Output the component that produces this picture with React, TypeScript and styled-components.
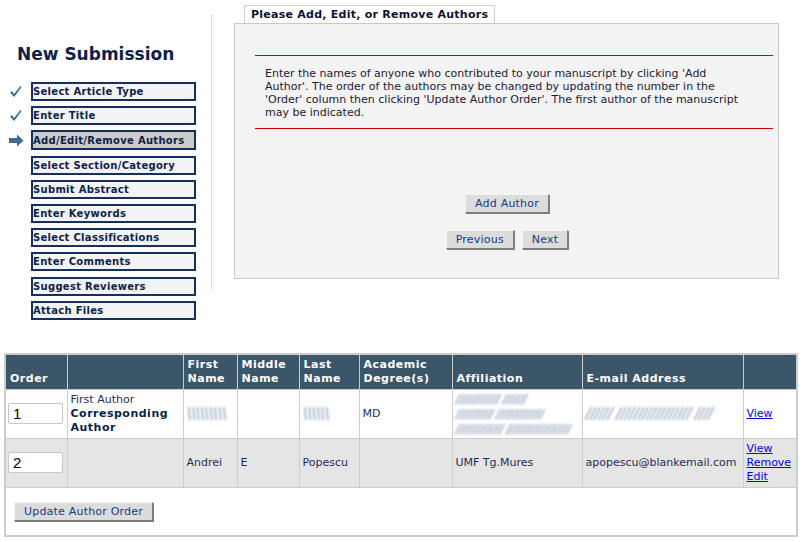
import React from "react";
import styled, { createGlobalStyle } from "styled-components";

const Global = createGlobalStyle`
  html, body { margin: 0; padding: 0; background: #fff; }
  body { font-family: "DejaVu Sans", Verdana, sans-serif; font-size: 11px; color: #1f2d55; }
`;

const Page = styled.div`
  width: 809px;
`;

const Top = styled.div`
  display: flex;
  align-items: flex-start;
`;

const Sidebar = styled.div`
  width: 212px;
  height: 275px;
  margin-top: 15px;
  border-right: 1px dotted #bdbdbd;
  box-sizing: border-box;
  padding-top: 29px;
`;

const Title = styled.h1`
  margin: 0 0 17px 17px;
  font-size: 17px;
  line-height: 21px;
  font-weight: bold;
  color: #0d1f4a;
`;

const NavList = styled.div`
  display: flex;
  flex-direction: column;
  gap: 5.2px;
`;

const NavRow = styled.div`
  display: flex;
  align-items: center;
`;

const IconCell = styled.div`
  width: 31px;
  height: 19px;
  display: flex;
  align-items: center;
  padding-left: 9px;
  box-sizing: border-box;
`;

const NavBox = styled.div<{ $active?: boolean }>`
  width: 165px;
  height: ${(p) => (p.$active ? 20 : 19)}px;
  box-sizing: border-box;
  border: 2px solid #15305a;
  background: ${(p) => (p.$active ? "#cbcbcb" : "#f3f3f3")};
  font-size: 10px;
  font-weight: bold;
  letter-spacing: 0.3px;
  color: #0d1f4a;
  display: flex;
  align-items: center;
  padding-left: 0;
  white-space: nowrap;
`;

const Main = styled.div`
  margin-left: 22px;
  margin-top: 5px;
  display: flex;
  flex-direction: column;
`;

const Tab = styled.div`
  align-self: flex-start;
  margin-left: 10px;
  height: 18px;
  box-sizing: border-box;
  padding: 2px 6px 0 6px;
  border: 1px solid #cfcfcf;
  border-bottom: none;
  background: #fff;
  font-weight: bold;
  font-size: 11px;
  letter-spacing: 0.25px;
  color: #0d1433;
  white-space: nowrap;
`;

const Panel = styled.div`
  width: 545px;
  height: 256px;
  box-sizing: border-box;
  background: #f3f3f3;
  border: 1px solid #c8c8c8;
  padding: 31px 5px 0 20px;
  display: flex;
  flex-direction: column;
`;

const RedRule = styled.div`
  height: 1px;
  background: #cc0000;
`;

const Intro = styled.p`
  margin: 11px 0 9px 0;
  padding: 0 10px;
  line-height: 13px;
  color: #1d1a33;
  white-space: nowrap;
`;

const ButtonRow = styled.div<{ $top: number }>`
  display: flex;
  justify-content: center;
  gap: 8px;
  margin-top: ${(p) => p.$top}px;
  margin-left: -14px;
`;

const Btn = styled.button`
  font-family: "DejaVu Sans", Verdana, sans-serif;
  font-size: 11px;
  letter-spacing: 0.2px;
  color: #18398a;
  background: #dcdcdc;
  height: 19px;
  padding: 0 9px;
  border: 1px solid;
  border-color: #f6f6f6 #7d7d7d #7d7d7d #f6f6f6;
  box-shadow: 1px 1px 0 #7d7d7d;
  cursor: pointer;
  line-height: 15px;
`;

const Table = styled.table`
  margin: 63px 0 0 4px;
  width: 794px;
  border-collapse: collapse;
  border: 2px solid #cdcdcd;
  table-layout: fixed;
`;

const Th = styled.th<{ $w: number }>`
  width: ${(p) => p.$w}px;
  background: #3b5569;
  color: #fff;
  font-size: 11px;
  font-weight: bold;
  letter-spacing: 0.5px;
  text-align: left;
  vertical-align: bottom;
  padding: 0 4px 3px 4px;
  height: 35px;
  line-height: 14px;
  border: 1px solid #cdcdcd;
  box-sizing: border-box;
`;

const Tr = styled.tr<{ $alt?: boolean }>`
  background: ${(p) => (p.$alt ? "#e5e5e5" : "#fff")};
`;

const Td = styled.td`
  border: 1px solid #cdcdcd;
  height: 48px;
  padding: 0 3px;
  vertical-align: middle;
  font-size: 11px;
  line-height: 14px;
  color: #1f2d55;
  overflow: hidden;
`;

const OrderInput = styled.input`
  width: 55px;
  height: 21px;
  box-sizing: border-box;
  border: 1px solid #c6c6c6;
  border-radius: 2px;
  font-family: "Liberation Sans", Arial, sans-serif;
  font-size: 15px;
  padding: 0 4px;
  color: #000;
  background: #fff;
  margin-left: -1px;
`;

const Strong = styled.div`
  font-weight: bold;
  letter-spacing: 0.5px;
  color: #0d1f4a;
`;

const Blur = styled.span`
  display: inline-block;
  filter: blur(1px);
  color: #8a9cbb;
  font-size: 16px;
  font-style: italic;
  letter-spacing: -1px;
  white-space: nowrap;
  vertical-align: middle;
  line-height: 18px;
`;

const BlurBlock = styled.div`
  filter: blur(1px);
  color: #8594b0;
  font-style: italic;
  font-size: 13px;
  line-height: 15px;
  letter-spacing: -1px;
  white-space: nowrap;
`;

const ActionLink = styled.a`
  display: block;
  color: #0000ee;
  text-decoration: underline;
  line-height: 14px;
`;

const FooterCell = styled.td`
  border: 1px solid #cdcdcd;
  height: 46px;
  padding: 1px 0 0 8px;
`;

const Check = () => (
  <svg width="13" height="13" viewBox="0 0 13 13">
    <path d="M1 7.5 L3 6 L5 9 L11.5 1 L12.5 2 L5.2 12 Z" fill="#3a6b9c" />
  </svg>
);

const Arrow = () => (
  <svg width="15" height="13" viewBox="0 0 15 13">
    <path d="M0 4 H8 V0.5 L14.5 6.5 L8 12.5 V9 H0 Z" fill="#3b6a9c" />
  </svg>
);

const steps: { label: string; state?: "done" | "active" }[] = [
  { label: "Select Article Type", state: "done" },
  { label: "Enter Title", state: "done" },
  { label: "Add/Edit/Remove Authors", state: "active" },
  { label: "Select Section/Category" },
  { label: "Submit Abstract" },
  { label: "Enter Keywords" },
  { label: "Select Classifications" },
  { label: "Enter Comments" },
  { label: "Suggest Reviewers" },
  { label: "Attach Files" },
];

const cols: { label: React.ReactNode; w: number }[] = [
  { label: "Order", w: 62 },
  { label: "", w: 116 },
  { label: <>First<br />Name</>, w: 54 },
  { label: <>Middle<br />Name</>, w: 62 },
  { label: <>Last<br />Name</>, w: 60 },
  { label: <>Academic<br />Degree(s)</>, w: 93 },
  { label: "Affiliation", w: 130 },
  { label: "E-mail Address", w: 161 },
  { label: "", w: 54 },
];

export default function App() {
  return (
    <Page>
      <Global />
      <Top>
        <Sidebar>
          <Title>New Submission</Title>
          <NavList>
            {steps.map((s) => (
              <NavRow key={s.label}>
                <IconCell>
                  {s.state === "done" && <Check />}
                  {s.state === "active" && <Arrow />}
                </IconCell>
                <NavBox $active={s.state === "active"}>{s.label}</NavBox>
              </NavRow>
            ))}
          </NavList>
        </Sidebar>
        <Main>
          <Tab>Please Add, Edit, or Remove Authors</Tab>
          <Panel>
            <RedRule />
            <Intro>
              Enter the names of anyone who contributed to your manuscript by clicking 'Add
              <br />
              Author'. The order of the authors may be changed by updating the number in the
              <br />
              'Order' column then clicking 'Update Author Order'. The first author of the manuscript
              <br />
              may be indicated.
            </Intro>
            <RedRule />
            <ButtonRow $top={65}>
              <Btn>Add Author</Btn>
            </ButtonRow>
            <ButtonRow $top={17}>
              <Btn>Previous</Btn>
              <Btn>Next</Btn>
            </ButtonRow>
          </Panel>
        </Main>
      </Top>
      <Table>
        <thead>
          <tr>
            {cols.map((c, i) => (
              <Th key={i} $w={c.w}>{c.label}</Th>
            ))}
          </tr>
        </thead>
        <tbody>
          <Tr>
            <Td><OrderInput defaultValue="1" /></Td>
            <Td>
              <div>First Author</div>
              <Strong>Corresponding<br />Author</Strong>
            </Td>
            <Td><Blur>\\\\\\\\\</Blur></Td>
            <Td></Td>
            <Td><Blur>\\\\\\</Blur></Td>
            <Td>MD</Td>
            <Td>
              <BlurBlock>
                ///////////// ///////<br />/////////// //////////////<br />////////////// ///////////////////
              </BlurBlock>
            </Td>
            <Td><Blur>////// ///////////////// ////</Blur></Td>
            <Td><ActionLink href="#">View</ActionLink></Td>
          </Tr>
          <Tr $alt>
            <Td><OrderInput defaultValue="2" /></Td>
            <Td></Td>
            <Td>Andrei</Td>
            <Td>E</Td>
            <Td>Popescu</Td>
            <Td></Td>
            <Td>UMF Tg.Mures</Td>
            <Td>apopescu@blankemail.com</Td>
            <Td>
              <ActionLink href="#">View</ActionLink>
              <ActionLink href="#">Remove</ActionLink>
              <ActionLink href="#">Edit</ActionLink>
            </Td>
          </Tr>
          <tr>
            <FooterCell colSpan={9}>
              <Btn>Update Author Order</Btn>
            </FooterCell>
          </tr>
        </tbody>
      </Table>
    </Page>
  );
}
